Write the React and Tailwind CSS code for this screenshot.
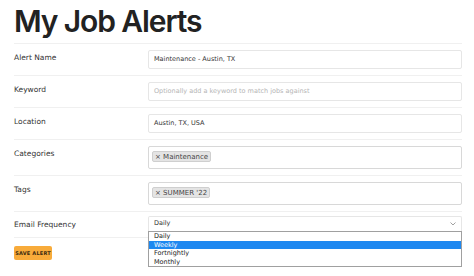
import React from 'react'

const Row = ({ label, children }) => (
  <div className="flex border-b border-[#f0f0f0]">
    <div className="w-[134px] shrink-0 pt-[8px] text-[7.5px] text-[#333]">{label}</div>
    <div className="flex-1 pt-[6px] pb-[6px]">{children}</div>
  </div>
)

const Input = ({ value, placeholder }) => (
  <div className="h-[19px] border border-[#e6e6e6] rounded-[2px] px-[5px] flex items-center text-[6.5px]">
    {value ? <span className="text-[#333]">{value}</span> : <span className="text-[#b5b5b5]">{placeholder}</span>}
  </div>
)

const Chips = ({ chip }) => (
  <div className="h-[23px] border border-[#d8d8d8] rounded-[2px] px-[3px] pt-[4px] flex items-start">
    <span className="bg-[#e4e4e4] border border-[#cfcfcf] rounded-[2px] px-[2px] h-[11px] leading-[10px] text-[7px] text-[#444]">
      × {chip}
    </span>
  </div>
)

export default function App() {
  const opts = ['Daily', 'Weekly', 'Fortnightly', 'Monthly']
  return (
    <div className="w-[474px] h-[276px] overflow-hidden bg-white pl-[14px] pr-[12px]" style={{ fontFamily: '"DejaVu Sans", sans-serif' }}>
      <h1 className="text-[30px] font-semibold text-[#222] leading-none pt-[6px] pb-[7px] tracking-[-1.1px]" style={{ fontFamily: 'Inter, sans-serif' }}>My Job Alerts</h1>
      <div className="border-t border-[#f0f0f0]">
        <Row label="Alert Name"><Input value="Maintenance - Austin, TX" /></Row>
        <Row label="Keyword"><Input placeholder="Optionally add a keyword to match jobs against" /></Row>
        <Row label="Location"><Input value="Austin, TX, USA" /></Row>
        <Row label="Categories"><Chips chip="Maintenance" /></Row>
        <Row label="Tags"><Chips chip="SUMMER '22" /></Row>
        <div className="flex">
          <div className="w-[134px] shrink-0">
            <div className="pt-[7px] pb-[7px] text-[7.5px] text-[#333] border-b border-[#f0f0f0]">Email Frequency</div>
            <div className="pt-[8px]">
              <button className="block bg-[#f8ab3a] rounded-[2px] w-[38px] h-[14px] text-[5px] font-bold text-[#3a2a10] tracking-[0.2px]">SAVE ALERT</button>
            </div>
          </div>
          <div className="flex-1 pt-[4px] relative">
            <div className="h-[15px] border border-[#e6e6e6] border-b-0 rounded-t-[2px] px-[5px] flex items-center justify-between text-[6.5px] text-[#333]">
              <span>Daily</span>
              <svg width="6" height="4" viewBox="0 0 6 4"><path d="M0.5 0.5 L3 3 L5.5 0.5" fill="none" stroke="#888" strokeWidth="0.8" /></svg>
            </div>
            <div className="border border-[#a0a0a0] bg-white text-[6.5px] text-[#222]">
              {opts.map((o) => (
                <div key={o} className={`h-[8.5px] leading-[8.5px] px-[5px] ${o === 'Weekly' ? 'bg-[#1e88f0] text-white' : ''}`}>{o}</div>
              ))}
            </div>
          </div>
        </div>
      </div>
    </div>
  )
}
